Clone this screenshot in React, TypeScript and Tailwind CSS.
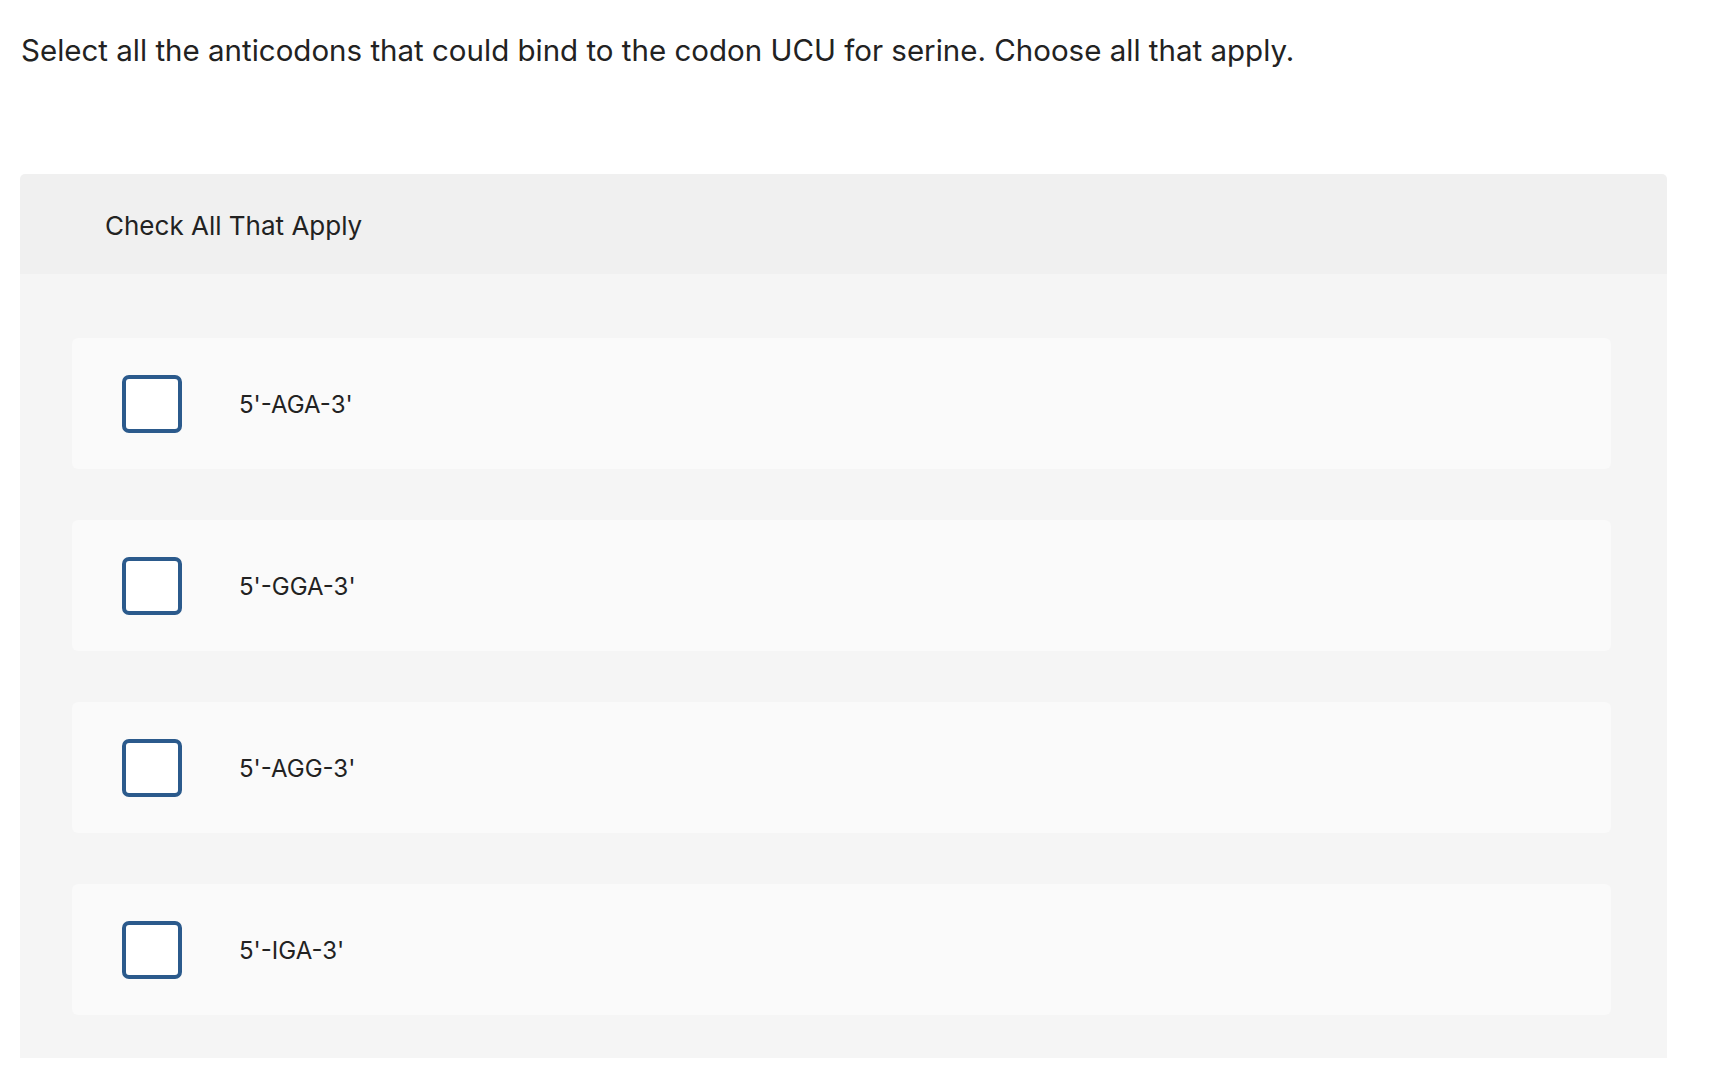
import React from "react";

const options = ["5'-AGA-3'", "5'-GGA-3'", "5'-AGG-3'", "5'-IGA-3'"];

export default function App() {
  return (
    <div
      className="min-h-screen bg-white text-[#222222]"
      style={{ fontFamily: "Inter, Lato, sans-serif" }}
    >
      <div className="px-5 pt-[30px]">
        <p className="text-[29.5px] leading-[40px] m-0 pl-px">
          Select all the anticodons that could bind to the codon UCU for serine.
          Choose all that apply.
        </p>
      </div>

      <div className="mx-5 mt-[104px] w-[1647px] rounded-t-[5px] overflow-hidden">
        <div className="h-[100px] bg-[#f0f0f0] flex items-center pl-[85px] pt-[3px]">
          <span className="text-[26px]">Check All That Apply</span>
        </div>
        <div className="bg-[#f5f5f5] pl-[52px] pr-[56px] pt-[64px] pb-[43px] flex flex-col gap-[51px]">
          {options.map((opt) => (
            <label
              key={opt}
              className="h-[131px] bg-[#fafafa] rounded-[6px] flex items-center pl-[50px] cursor-pointer"
            >
              <span className="w-[60px] h-[58px] border-4 border-[#2b5a8c] rounded-[7px] bg-white shrink-0" />
              <span className="ml-[57px] text-[24px] pt-[3px]">{opt}</span>
            </label>
          ))}
        </div>
      </div>
    </div>
  );
}
